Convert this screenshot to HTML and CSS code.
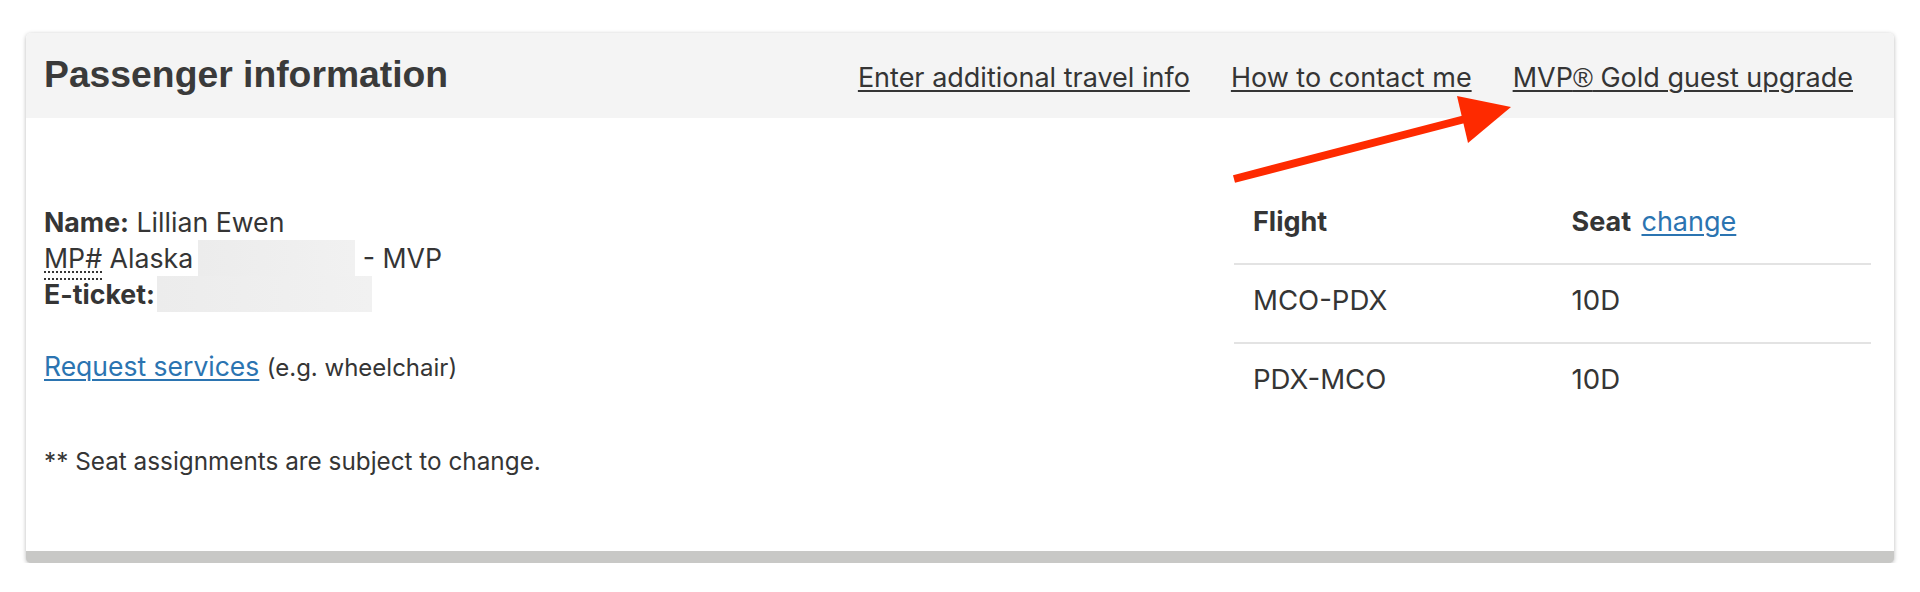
FILE: index.html
```html
<!DOCTYPE html>
<html lang="en">
<head>
  <meta charset="UTF-8">
  <title>Passenger information</title>
  <link rel="stylesheet" href="styles.css">
</head>
<body>

  <section class="card">
    <header class="card-header">
      <h2>Passenger information</h2>
      <nav class="header-links">
        <a href="#">Enter additional travel info</a>
        <a href="#">How to contact me</a>
        <a href="#">MVP<span class="reg">®</span> Gold guest upgrade</a>
      </nav>
    </header>

    <div class="card-body">
      <div class="passenger">
        <p class="details">
          <strong>Name:</strong> Lillian Ewen<br>
          <abbr title="Mileage Plan number">MP#</abbr> Alaska<span class="redacted mp"></span> - MVP<br>
          <strong>E-ticket:</strong><span class="redacted ticket"></span>
        </p>
        <p class="services"><a href="#">Request services</a> <small>(e.g. wheelchair)</small></p>
        <p class="note">** Seat assignments are subject to change.</p>
      </div>

      <table class="seats">
        <thead>
          <tr>
            <th>Flight</th>
            <th>Seat <a href="#">change</a></th>
          </tr>
        </thead>
        <tbody>
          <tr>
            <td>MCO-PDX</td>
            <td>10D</td>
          </tr>
          <tr>
            <td>PDX-MCO</td>
            <td>10D</td>
          </tr>
        </tbody>
      </table>
    </div>

    <!-- annotation pointing at the upgrade link -->
    <svg class="arrow" width="300" height="100" viewBox="0 0 300 100">
      <line x1="9" y1="89" x2="240" y2="29" stroke="#fe2a00" stroke-width="8"/>
      <polygon points="286,17 232,6 243,53" fill="#fe2a00"/>
    </svg>
  </section>

</body>
</html>
```
FILE: styles.css
```css
:root {
  --text: #353535;
  --link: #2b74b1;
  --line: #e3e3e3;
  --header: #f4f4f4;
}

body {
  margin: 0;
  background: #fff;
  color: var(--text);
  font-family: Inter, "Noto Sans", sans-serif;
}

.card {
  position: relative;
  margin: 33px 26px 0;
  background: #fff;
  border-bottom: 12px solid #c8c8c6;
  border-radius: 5px;
  box-shadow: 0 1px 4px rgba(0, 0, 0, 0.28);
  overflow: hidden;
}

.card-header {
  display: flex;
  align-items: baseline;
  height: 85px;
  box-sizing: border-box;
  padding: 23px 41px 0 18px;
  background: var(--header);
}

.card-header h2 {
  flex: 1;
  margin: 0;
  font-family: "Liberation Sans", Arial, sans-serif;
  font-size: 37.3px;
  line-height: 37px;
  font-weight: bold;
  color: #3a3a3a;
}

.header-links {
  display: flex;
  gap: 41px;
}

.header-links a {
  color: var(--text);
  font-size: 27px;
  line-height: 36px;
  text-decoration-thickness: 2px;
  text-underline-offset: 3px;
}

.header-links .reg {
  font-family: "Liberation Sans", Arial, sans-serif;
}

.card-body {
  display: flex;
  align-items: flex-start;
  padding: 86px 23px 72px 18px;
}

.passenger {
  flex: 1;
  font-size: 26.7px;
  line-height: 36px;
}

.passenger p {
  margin: 0;
}

.passenger strong {
  font-weight: 700;
}

abbr {
  text-decoration: underline dotted 2px;
  text-underline-offset: 3px;
  border-bottom: 2px dotted var(--text);
  padding-bottom: 4px;
}

.redacted {
  display: inline-block;
  height: 36px;
  vertical-align: top;
  background: linear-gradient(90deg, #ececec, #f1f1f1);
}

.redacted.mp {
  width: 157px;
  margin-left: 5px;
}

.redacted.ticket {
  width: 215px;
  margin-left: 2px;
}

.services {
  margin-top: 36px !important;
  font-size: 26.5px;
}

.services a {
  color: var(--link);
  text-decoration-thickness: 2px;
  text-underline-offset: 3px;
}

.services small {
  font-size: 24px;
}

.note {
  margin-top: 57px !important;
  font-size: 24.3px;
}

.seats {
  width: 637px;
  border-collapse: collapse;
  font-size: 27.6px;
  line-height: 36px;
}

.seats th,
.seats td {
  width: 50%;
  padding: 17px 19px 24px;
  text-align: left;
}

.seats th {
  padding-top: 0;
  padding-bottom: 23px;
  font-weight: 700;
  font-size: 27px;
}

.seats thead tr,
.seats tbody tr:first-child {
  border-bottom: 2px solid var(--line);
}

.seats th a {
  margin-left: 4px;
  font-weight: 400;
  color: var(--link);
  text-decoration-thickness: 2px;
  text-underline-offset: 3px;
}

.arrow {
  position: absolute;
  left: 1199px;
  top: 57px;
}
```
